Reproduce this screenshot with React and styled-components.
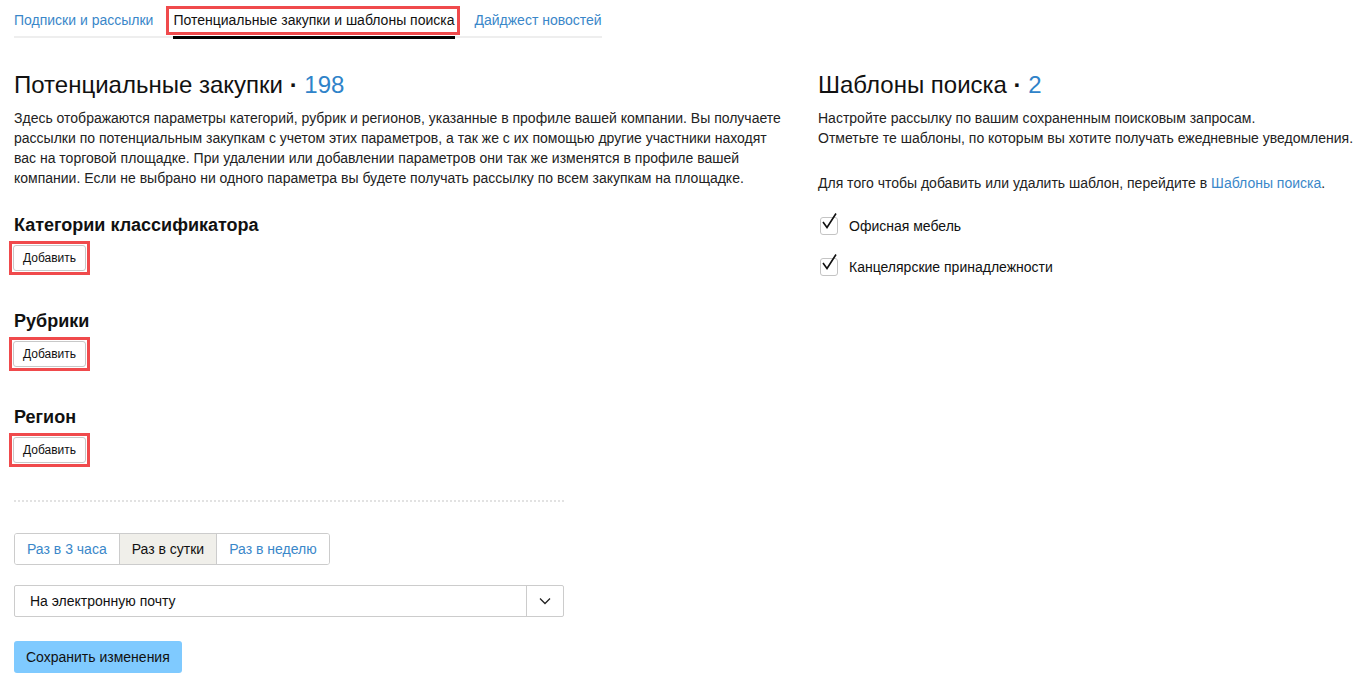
import React from "react";
import styled, { createGlobalStyle } from "styled-components";

const GlobalStyle = createGlobalStyle`
  body {
    margin: 0;
    background: #fff;
    font-family: "Liberation Sans", Arial, sans-serif;
    color: #222;
  }
`;

const periods = ["Раз в 3 часа", "Раз в сутки", "Раз в неделю"];
const templates = ["Офисная мебель", "Канцелярские принадлежности"];
const sections = ["Категории классификатора", "Рубрики", "Регион"];

export default function App() {
  const [period, setPeriod] = React.useState(1);
  const [checked, setChecked] = React.useState([true, true]);

  return (
    <Page>
      <GlobalStyle />
      <TabBar>
        <Tab>Подписки и рассылки</Tab>
        <Tab active>Потенциальные закупки и шаблоны поиска</Tab>
        <Tab>Дайджест новостей</Tab>
      </TabBar>

      <Columns>
        <LeftCol>
          <Title>
            Потенциальные закупки <Dot>·</Dot> <Count>198</Count>
          </Title>
          <Text>
            Здесь отображаются параметры категорий, рубрик и регионов, указанные в профиле вашей
            компании. Вы получаете рассылки по потенциальным закупкам с учетом этих параметров, а
            так же с их помощью другие участники находят вас на торговой площадке. При удалении или
            добавлении параметров они так же изменятся в профиле вашей компании. Если не выбрано ни
            одного параметра вы будете получать рассылку по всем закупкам на площадке.
          </Text>

          {sections.map((s) => (
            <Section key={s}>
              <SectionTitle>{s}</SectionTitle>
              <Highlight>
                <AddButton>Добавить</AddButton>
              </Highlight>
            </Section>
          ))}

          <Divider />

          <Segmented>
            {periods.map((p, i) => (
              <Segment key={p} active={i === period} onClick={() => setPeriod(i)}>
                {p}
              </Segment>
            ))}
          </Segmented>

          <Select>
            <SelectValue>На электронную почту</SelectValue>
            <SelectArrow>
              <svg width="12" height="8" viewBox="0 0 12 8">
                <polyline points="1,1.5 6,6.5 11,1.5" fill="none" stroke="#222" strokeWidth="1.3" />
              </svg>
            </SelectArrow>
          </Select>

          <SaveButton>Сохранить изменения</SaveButton>
        </LeftCol>

        <RightCol>
          <Title>
            Шаблоны поиска <Dot>·</Dot> <Count>2</Count>
          </Title>
          <Text>
            Настройте рассылку по вашим сохраненным поисковым запросам.
            <br />
            Отметьте те шаблоны, по которым вы хотите получать ежедневные уведомления.
          </Text>
          <Note>
            Для того чтобы добавить или удалить шаблон, перейдите в <Link>Шаблоны поиска</Link>.
          </Note>
          <CheckList>
            {templates.map((t, i) => (
              <CheckRow
                key={t}
                onClick={() => setChecked(checked.map((c, j) => (j === i ? !c : c)))}
              >
                <Box>
                  {checked[i] && (
                    <svg width="20" height="20" viewBox="0 0 20 20">
                      <polyline
                        points="4,10 8,15.5 17,1.5"
                        fill="none"
                        stroke="#111"
                        strokeWidth="1.6"
                      />
                    </svg>
                  )}
                </Box>
                {t}
              </CheckRow>
            ))}
          </CheckList>
        </RightCol>
      </Columns>
    </Page>
  );
}

const Page = styled.div`
  padding: 0 14px;
`;

const TabBar = styled.div`
  display: flex;
  gap: 20px;
  width: fit-content;
  padding-top: 12px;
  border-bottom: 2px solid #eee;
`;

const Tab = styled.div`
  position: relative;
  font-size: 14px;
  line-height: 16px;
  padding-bottom: 8px;
  cursor: pointer;
  color: ${(p) => (p.active ? "#111" : "#3a87c9")};
  ${(p) =>
    p.active &&
    `
    &::before {
      content: "";
      position: absolute;
      left: -7px;
      right: -5px;
      top: -6px;
      height: 29px;
      border: 3px solid #f04a4c;
      box-sizing: border-box;
    }
    &::after {
      content: "";
      position: absolute;
      left: 0;
      right: 0;
      bottom: -3px;
      height: 3px;
      background: #000;
    }
  `}
`;

const Columns = styled.div`
  display: flex;
  gap: 32px;
`;

const LeftCol = styled.div`
  width: 772px;
  flex-shrink: 0;
`;

const RightCol = styled.div`
  flex: 1;
`;

const Title = styled.h1`
  margin: 33px 0 0;
  font-size: 24px;
  font-weight: 400;
  line-height: 28px;
  color: #111;
`;

const Dot = styled.span`
  font-weight: 700;
`;

const Count = styled.span`
  color: #2f83c9;
`;

const Text = styled.p`
  margin: 9px 0 0;
  font-size: 14px;
  line-height: 20px;
  color: #222;
`;

const Note = styled(Text)`
  margin-top: 25px;
`;

const Link = styled.a`
  color: #3a87c9;
  text-decoration: none;
  cursor: pointer;
`;

const Section = styled.div`
  margin-top: 26px;
  & + & {
    margin-top: 35px;
  }
`;

const SectionTitle = styled.h3`
  margin: 0;
  font-size: 18px;
  font-weight: 700;
  line-height: 22px;
  color: #111;
`;

const Highlight = styled.div`
  display: inline-block;
  margin: 5px 0 0 -5px;
  padding: 1px;
  border: 3px solid #f04a4c;
`;

const AddButton = styled.button`
  display: block;
  height: 26px;
  padding: 0 9px;
  font-family: inherit;
  font-size: 12px;
  color: #111;
  background: #fff;
  border: 1px solid #c8c8c8;
  border-radius: 3px;
  cursor: pointer;
`;

const Divider = styled.div`
  width: 550px;
  margin-top: 33px;
  border-top: 2px dotted #e2e2e2;
`;

const Segmented = styled.div`
  display: inline-flex;
  margin-top: 31px;
  border: 1px solid #ccc;
  border-radius: 3px;
  overflow: hidden;
`;

const Segment = styled.div`
  height: 30px;
  line-height: 30px;
  padding: 0 12px;
  font-size: 14px;
  cursor: pointer;
  color: ${(p) => (p.active ? "#111" : "#3a87c9")};
  background: ${(p) => (p.active ? "#f0efea" : "#fff")};
  & + & {
    border-left: 1px solid #ccc;
  }
`;

const Select = styled.div`
  display: flex;
  width: 550px;
  height: 32px;
  margin-top: 20px;
  border: 1px solid #ccc;
  border-radius: 2px;
  box-sizing: border-box;
`;

const SelectValue = styled.div`
  flex: 1;
  padding-left: 15px;
  font-size: 14px;
  line-height: 30px;
  color: #111;
`;

const SelectArrow = styled.div`
  width: 36px;
  display: flex;
  align-items: center;
  justify-content: center;
  border-left: 1px solid #ccc;
`;

const SaveButton = styled.button`
  display: block;
  margin-top: 24px;
  height: 32px;
  padding: 0 12px;
  font-family: inherit;
  font-size: 14px;
  color: #111;
  background: #7fcaff;
  border: none;
  border-radius: 3px;
  cursor: pointer;
`;

const CheckList = styled.div`
  margin-top: 23px;
  display: flex;
  flex-direction: column;
  gap: 21px;
`;

const CheckRow = styled.label`
  display: flex;
  align-items: center;
  gap: 11px;
  height: 20px;
  font-size: 14px;
  color: #111;
  cursor: pointer;
`;

const Box = styled.span`
  position: relative;
  width: 16px;
  height: 16px;
  margin-left: 2px;
  border: 1px solid #c4c4c4;
  border-radius: 3px;
  svg {
    position: absolute;
    left: -2px;
    top: -6px;
  }
`;
